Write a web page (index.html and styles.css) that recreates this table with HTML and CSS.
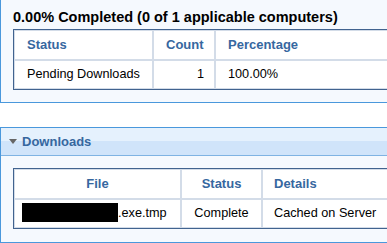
FILE: index.html
```html
<!DOCTYPE html>
<html lang="en">
<head>
<meta charset="utf-8">
<title>Deployment status</title>
<link rel="stylesheet" href="styles.css">
</head>
<body>
  <section class="panel summary">
    <h2 class="summary-title">0.00% Completed (0 of 1 applicable computers)</h2>
    <table class="grid grid-summary">
      <thead>
        <tr>
          <th class="col-status">Status</th>
          <th class="col-count">Count</th>
          <th class="col-pct">Percentage</th>
        </tr>
      </thead>
      <tbody>
        <tr>
          <td>Pending Downloads</td>
          <td class="num">1</td>
          <td>100.00%</td>
        </tr>
      </tbody>
    </table>
  </section>

  <section class="panel downloads">
    <div class="panel-head">
      <svg class="caret" width="8" height="5" viewBox="0 0 8 5" aria-hidden="true"><path d="M0 0H8L4 5Z" fill="#666"/></svg>
      <span class="panel-label">Downloads</span>
    </div>
    <div class="panel-body">
      <table class="grid grid-files">
        <thead>
          <tr>
            <th class="col-file center">File</th>
            <th class="col-state center">Status</th>
            <th class="col-details">Details</th>
          </tr>
        </thead>
        <tbody>
          <tr>
            <td class="file"><span class="redacted"></span>.exe.tmp</td>
            <td class="center">Complete</td>
            <td>Cached on Server</td>
          </tr>
        </tbody>
      </table>
    </div>
  </section>
</body>
</html>
```

FILE: styles.css
```css
* {
  box-sizing: border-box;
}

html,
body {
  margin: 0;
  padding: 0;
  background: #ffffff;
  overflow: hidden;
}

body {
  width: 387px;
  height: 243px;
  font-family: "Liberation Sans", Arial, sans-serif;
  font-size: 13px;
  color: #000000;
}

/* Panels run flush to the right edge of the window */
.panel {
  width: 100%;
  border: 1px solid #4a98dc;
  border-right: 0;
  background: #f5f9fe;
}

.summary {
  margin-top: -12px;
  padding: 19px 0 12px 12px;
}

.summary-title {
  margin: 0 0 3px;
  font-size: 14.5px;
  line-height: 18px;
  font-weight: bold;
  color: #000000;
}

.downloads {
  margin-top: 24px;
}

.panel-head {
  display: flex;
  align-items: center;
  height: 28px;
  padding-left: 8px;
  border-bottom: 1px solid #7fb3e3;
  background: linear-gradient(to bottom, #e5f1fd 0, #e5f1fd 13px, #d0e4fa 13px, #d0e4fa 100%);
}

.caret {
  display: block;
  margin-right: 5px;
}

.panel-label {
  font-weight: bold;
  font-size: 13px;
  line-height: 27px;
  color: #36679f;
}

.panel-body {
  padding: 12px 0 13px 12px;
}

/* Data grids, open on the right where they meet the window edge */
.grid {
  width: 100%;
  table-layout: fixed;
  border-collapse: separate;
  border-spacing: 0;
  border: 1px solid #41638f;
  border-right: 0;
  background: #ffffff;
}

.grid th,
.grid td {
  border: 1px solid #d3dce8;
  padding: 0 11px 0 12px;
  text-align: left;
  white-space: nowrap;
  overflow: hidden;
}

.grid th:last-child,
.grid td:last-child {
  border-right: 0;
}

.grid th {
  height: 30px;
  line-height: 28px;
  font-weight: bold;
  color: #36679f;
}

.grid td {
  height: 29px;
  line-height: 27px;
  font-size: 12.7px;
  color: #000000;
}

.grid .center {
  text-align: center;
  padding: 0;
}

.grid .num {
  text-align: right;
  padding-right: 10px;
}

.col-status { width: 139px; }
.col-count { width: 62px; }
.col-file { width: 167px; }
.col-state { width: 81px; }

.grid-files .col-details,
.grid-files td:last-child {
  padding-left: 11px;
}

.grid .file {
  padding-left: 7px;
}

.redacted {
  display: inline-block;
  width: 96px;
  height: 19px;
  background: #000000;
  vertical-align: middle;
  margin-top: -3px;
}
```
